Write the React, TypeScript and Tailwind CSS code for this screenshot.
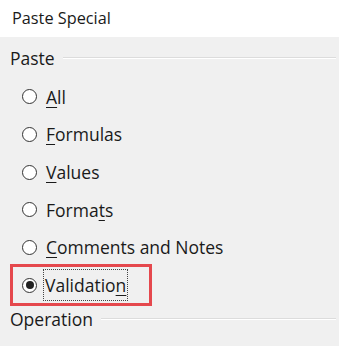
const options = [
  { pre: "", key: "A", post: "ll" },
  { pre: "", key: "F", post: "ormulas" },
  { pre: "", key: "V", post: "alues" },
  { pre: "Forma", key: "t", post: "s" },
  { pre: "", key: "C", post: "omments and Notes" },
];

function Radio({ checked }: { checked?: boolean }) {
  return (
    <span className="flex h-[15px] w-[15px] shrink-0 items-center justify-center rounded-full border border-[#333] bg-white">
      {checked && <span className="h-[8px] w-[8px] rounded-full bg-[#222]" />}
    </span>
  );
}

function GroupHeader({ label }: { label: string }) {
  return (
    <div className="flex items-center gap-[8px] pr-[3px]">
      <span className="text-[17.5px] leading-[22px]">{label}</span>
      <span className="h-[2px] flex-1 border-t border-b border-t-[#dcdcdc] border-b-white" />
    </div>
  );
}

export default function App() {
  return (
    <div
      className="flex h-[346px] w-[339px] flex-col overflow-hidden bg-[#f0f0f0] text-[#1a1a1a]"
      style={{ fontFamily: '"Open Sans", "Noto Sans", sans-serif' }}
    >
      <div className="flex h-[37px] shrink-0 items-center bg-white pl-[12px] text-[16.3px]">
        Paste Special
      </div>
      <div className="flex flex-col pl-[10px] pt-[10px]">
        <GroupHeader label="Paste" />
        <div className="flex flex-col pt-[9px]">
          {options.map((o) => (
            <div key={o.post} className="flex h-[37.7px] items-center gap-[9px] pl-[12px]">
              <Radio />
              <span className="text-[17.5px]">
                {o.pre}
                <span className="underline underline-offset-[3px]">{o.key}</span>
                {o.post}
              </span>
            </div>
          ))}
          <div className="-mt-[2px] flex h-[42px] w-[142px] items-center gap-[6px] border-[3px] border-[#e5484d] pl-[9px]">
            <Radio checked />
            <span className="border border-dotted border-[#444] px-[1px] py-[4px] text-[17.5px] leading-[22px]">
              Validatio<span className="underline underline-offset-[3px]">n</span>
            </span>
          </div>
        </div>
        <div className="pt-[2px]">
          <GroupHeader label="Operation" />
        </div>
      </div>
    </div>
  );
}
